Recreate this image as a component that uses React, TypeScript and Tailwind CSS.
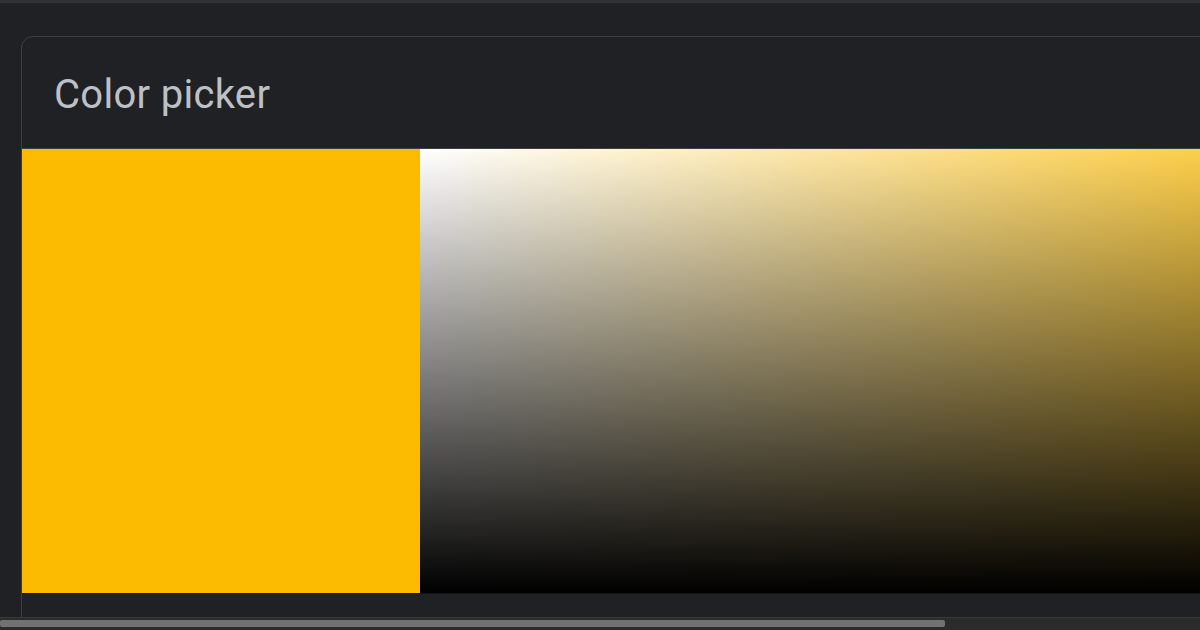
export default function App() {
  return (
    <div className="w-[1200px] h-[630px] overflow-hidden bg-[#202124] flex flex-col" style={{ fontFamily: 'Roboto, "Noto Sans", sans-serif' }}>
      <div className="h-[3px] shrink-0 bg-[#313236]" />
      <div className="flex-1 min-h-0 overflow-hidden pl-[21px] pt-[33px]">
        <div className="w-[1500px] h-[720px] rounded-xl border border-[#3c4043] flex flex-col overflow-hidden">
          <div className="h-[112px] shrink-0 border-b border-[#3c4043] flex items-center pl-[32px] pt-[4px]">
            <h1 className="text-[40px] leading-none font-normal text-[#bdc1c6] tracking-[0.3px]">Color picker</h1>
          </div>
          <div className="flex h-[445px] shrink-0 border-b border-[#141517]">
            <div className="w-[398px] shrink-0 bg-[#fcbb00]" />
            <div className="relative flex-1 bg-[linear-gradient(to_right,#ffffff,#fcbb00)]">
              <div className="absolute inset-0 bg-[linear-gradient(to_bottom,rgba(0,0,0,0),#000000)]" />
            </div>
          </div>
        </div>
      </div>
      <div className="h-[13px] shrink-0 bg-[#2b2b2b] border-t border-[#3a3a3a] pt-[2px]">
        <div className="w-[945px] h-[7px] rounded-[2px] bg-[#727272]" />
      </div>
    </div>
  );
}
